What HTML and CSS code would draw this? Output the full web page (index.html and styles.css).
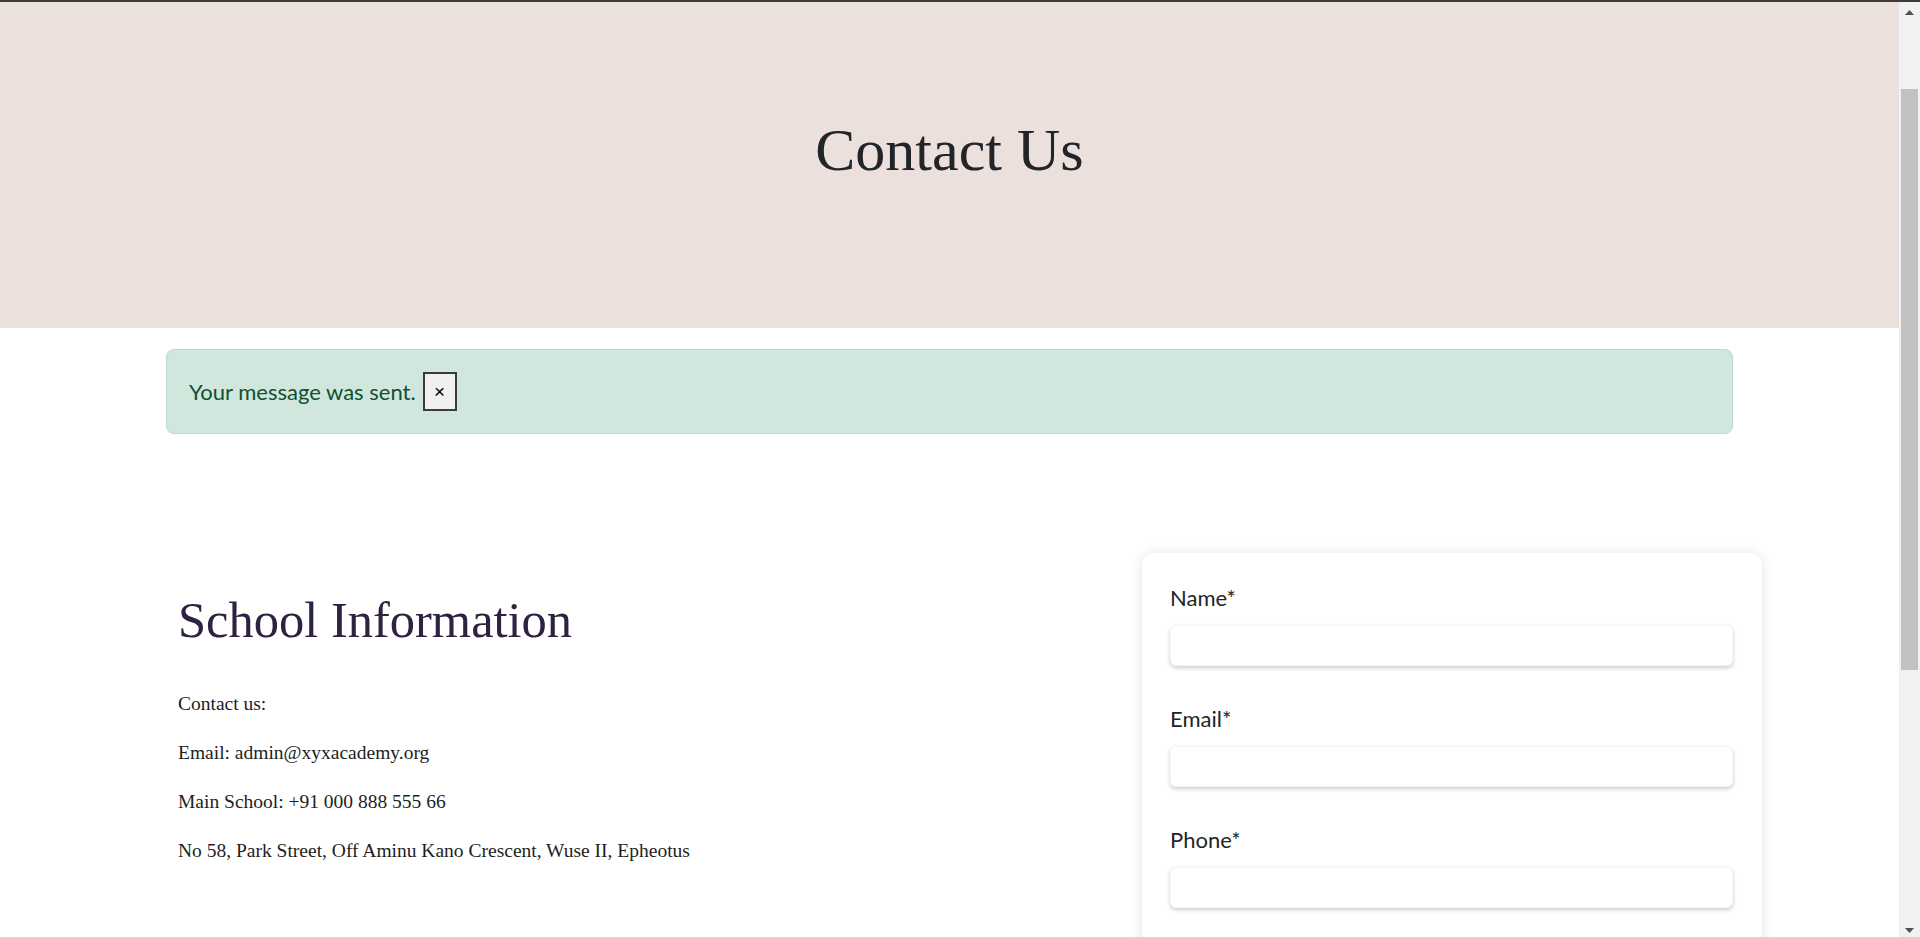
FILE: index.html
```html
<!DOCTYPE html>
<html lang="en">
<head>
<meta charset="utf-8">
<title>Contact Us</title>
<link rel="stylesheet" href="styles.css">
</head>
<body>
<div class="chrome-line"></div>
<div class="window">
  <div class="page">
    <header class="hero">
      <h1 class="hero-title">Contact Us</h1>
    </header>
    <div class="alert-wrap">
      <div class="alert">
        <span class="alert-text">Your message was sent.</span>
        <button class="alert-close" type="button">×</button>
      </div>
    </div>
    <section class="contact">
      <div class="info">
        <h2 class="info-title">School Information</h2>
        <p class="info-line">Contact us:</p>
        <p class="info-line">Email: admin@xyxacademy.org</p>
        <p class="info-line">Main School: +91 000 888 555 66</p>
        <p class="info-line">No 58, Park Street, Off Aminu Kano Crescent, Wuse II, Epheotus</p>
      </div>
      <form class="card">
        <div class="field">
          <label class="field-label">Name*</label>
          <input class="field-input" type="text">
        </div>
        <div class="field">
          <label class="field-label">Email*</label>
          <input class="field-input" type="email">
        </div>
        <div class="field">
          <label class="field-label">Phone*</label>
          <input class="field-input" type="tel">
        </div>
      </form>
    </section>
  </div>
  <div class="scrollbar">
    <div class="sb-btn sb-up"><svg width="9" height="5" viewBox="0 0 9 5"><polygon points="4.5,0 9,5 0,5" fill="#505050"/></svg></div>
    <div class="sb-track"><div class="sb-thumb"></div></div>
    <div class="sb-btn sb-down"><svg width="9" height="5" viewBox="0 0 9 5"><polygon points="0,0 9,0 4.5,5" fill="#505050"/></svg></div>
  </div>
</div>
</body>
</html>
```
FILE: styles.css
```css
html, body {
  margin: 0;
  height: 100%;
  overflow: hidden;
}
body {
  font-family: "Liberation Serif", serif;
  background: #fff;
}
.chrome-line {
  height: 2px;
  background: #3c3c3c;
}
.window {
  display: flex;
  height: 935px;
}
.page {
  flex: 1;
  min-width: 0;
  overflow: hidden;
}
.hero {
  height: 326px;
  box-sizing: border-box;
  padding-top: 112px;
  background: #ebe0db;
  text-align: center;
}
.hero-title {
  margin: 0;
  font: 400 60px/72px "Liberation Serif", serif;
  color: #212529;
}
.alert-wrap {
  padding-top: 21px;
}
.alert {
  width: 1567px;
  height: 85px;
  margin: 0 auto;
  box-sizing: border-box;
  display: flex;
  align-items: center;
  padding: 0 22px;
  border: 1px solid #badbcc;
  border-radius: 8px;
  background: #d1e7dd;
  color: #0f5132;
  font: 22px Lato, sans-serif;
}
.alert-close {
  width: 34px;
  height: 39px;
  margin-left: 7px;
  padding: 0;
  border: 2px solid #3b3b3b;
  border-radius: 0;
  background: #f0f0f0;
  color: #000;
  font: 19px "Liberation Sans", sans-serif;
}
.contact {
  display: flex;
  margin-top: 119px;
  padding-left: 178px;
}
.info {
  width: 964px;
  flex: none;
  box-sizing: border-box;
  padding-top: 37px;
}
.info-title {
  margin: 0 0 39px;
  font: 400 50.5px/60px "Liberation Serif", serif;
  color: #2f2140;
}
.info-line {
  margin: 0 0 20px;
  font: 19.5px/29px "Liberation Serif", serif;
  color: #1e1e1e;
}
.card {
  width: 620px;
  flex: none;
  box-sizing: border-box;
  padding: 28px 29px 80px 28px;
  background: #fff;
  border-radius: 12px;
  box-shadow: 0 0 14px rgba(0, 0, 0, 0.1);
}
.field {
  display: flex;
  flex-direction: column;
}
.field + .field {
  margin-top: 36px;
}
.field-label {
  margin-bottom: 11px;
  font: 22px/33px Lato, sans-serif;
  color: #212529;
}
.field-input {
  height: 41px;
  box-sizing: border-box;
  padding: 0 12px;
  border: 1px solid #f6f6f6;
  border-radius: 6px;
  background: #fff;
  box-shadow: 0 2px 4px rgba(0, 0, 0, 0.2);
  font: 18px Lato, sans-serif;
  outline: none;
}
.scrollbar {
  width: 21px;
  flex: none;
  display: flex;
  flex-direction: column;
  background: #f1f1f1;
}
.sb-btn {
  height: 21px;
  display: flex;
  justify-content: center;
  align-items: center;
}
.sb-down {
  align-items: flex-end;
  padding-bottom: 4px;
  box-sizing: border-box;
}
.sb-btn svg {
  display: block;
}
.sb-track {
  flex: 1;
  padding-top: 66px;
}
.sb-thumb {
  height: 581px;
  margin: 0 2px;
  background: #c1c1c1;
}
```
